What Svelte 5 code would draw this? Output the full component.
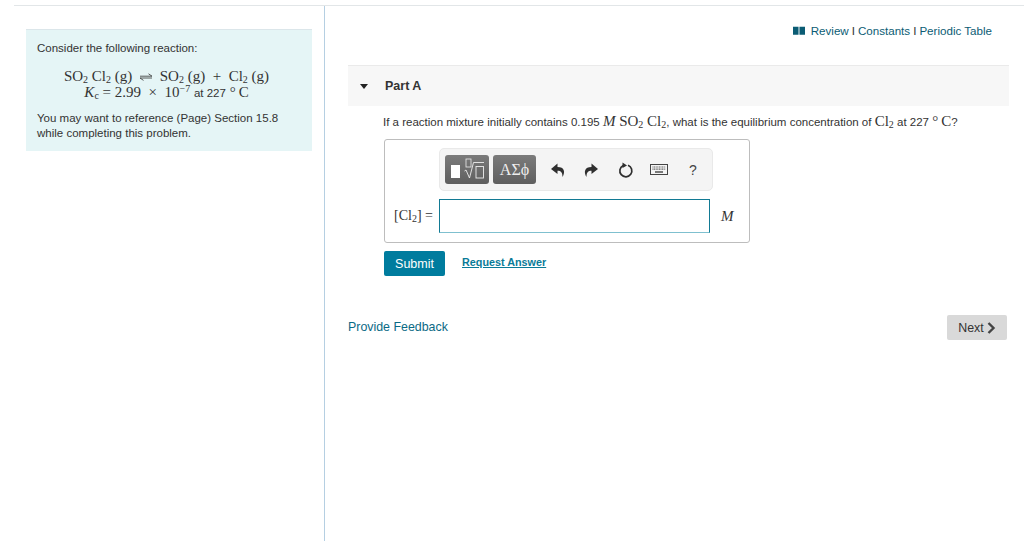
<script>
	const tools = [
		{ name: 'undo', d: 'M7.5 1.5 L1 7 L7.5 12 V8.8 C11 8.8 12.5 10.5 12.5 15 C15.5 10 14.5 5 7.5 5 Z' },
		{ name: 'redo', d: 'M8.5 1.5 L15 7 L8.5 12 V8.8 C5 8.8 3.5 10.5 3.5 15 C0.5 10 1.5 5 8.5 5 Z' }
	];
</script>

<div class="page">
	<aside class="side">
		<div class="intro">
			<p class="lead">Consider the following reaction:</p>
			<div class="reaction">
				<div class="math">SO<sub>2</sub> Cl<sub>2</sub> (g)
					<svg class="eq" viewBox="0 0 14 8" width="14" height="8" aria-hidden="true">
						<path d="M1 3.2 H13 L9.5 0.8 M13 5 H1 L4.5 7.4" fill="none" stroke="#333" stroke-width="0.8" />
					</svg>
					SO<sub>2</sub> (g) &nbsp;+&nbsp; Cl<sub>2</sub> (g)</div>
				<div class="math"><i>K</i><sub>c</sub> = 2.99 &nbsp;×&nbsp; 10<sup>−7</sup>&nbsp;<span class="plain">at 227</span> °&thinsp;C</div>
			</div>
			<p class="note">You may want to reference (Page) Section 15.8<br />while completing this problem.</p>
		</div>
	</aside>

	<main class="content">
		<nav class="links">
			<svg viewBox="0 0 13 9" width="12" height="9" aria-hidden="true">
				<path d="M0 0.5 H6 V9 H0 Z M7 0.5 H13 V9 H7 Z" fill="#0b5c74" />
			</svg>
			<span>Review</span><b>I</b><span>Constants</span><b>I</b><span>Periodic Table</span>
		</nav>

		<section class="part">
			<header class="part-head">
				<span class="caret"></span>
				<h2>Part A</h2>
			</header>
			<p class="question">If a reaction mixture initially contains 0.195 <span class="math big"><i>M</i> SO<sub>2</sub> Cl<sub>2</sub></span>, what is the equilibrium concentration of <span class="math big">Cl<sub>2</sub></span> at 227 <span class="math big">°&thinsp;C</span>?</p>

			<div class="answer-box">
				<div class="toolbar">
					<button class="tmpl" type="button" aria-label="Templates">
						<svg viewBox="0 0 44 29" width="44" height="29" aria-hidden="true">
							<rect x="6" y="10" width="9" height="13" fill="#fff" />
							<rect x="21" y="4" width="5" height="8" fill="none" stroke="#eee" stroke-width="0.8" />
							<path d="M19.5 16 L21 15 L24.5 23 L28.5 7.5 H39" fill="none" stroke="#eee" stroke-width="0.9" />
							<rect x="31" y="11.5" width="7.5" height="11.5" fill="none" stroke="#eee" stroke-width="0.9" />
						</svg>
					</button>
					<button class="tmpl greek" type="button">ΑΣϕ</button>
					{#each tools as tool}
						<svg class="tool {tool.name}" viewBox="0 0 16 16" width="16" height="16" role="img" aria-label={tool.name}>
							<path d={tool.d} fill="#2f2f2f" />
						</svg>
					{/each}
					<svg class="tool reset" viewBox="0 0 16 16" width="16" height="16" role="img" aria-label="reset">
						<path d="M10 3.2 A6 6 0 1 1 5.2 3.4" fill="none" stroke="#2f2f2f" stroke-width="1.7" />
						<path d="M4.5 0.6 L9 3.4 L4.5 6 Z" fill="#2f2f2f" />
					</svg>
					<svg class="tool keys" viewBox="0 0 18 11" width="18" height="11" role="img" aria-label="keyboard">
						<rect x="0.5" y="0.5" width="17" height="10" fill="#f4f4f4" stroke="#444" />
						<path d="M2.5 3 H15.5 M2.5 5.2 H15.5" stroke="#555" stroke-width="1.2" stroke-dasharray="1 0.6" />
						<path d="M5 8 H13" stroke="#444" stroke-width="1.4" />
					</svg>
					<span class="help">?</span>
				</div>
				<div class="entry">
					<span class="math label">[Cl<sub>2</sub>] =</span>
					<input type="text" aria-label="Concentration of Cl2" />
					<span class="math unit"><i>M</i></span>
				</div>
			</div>

			<div class="actions">
				<button class="submit" type="button">Submit</button>
				<span class="request">Request Answer</span>
			</div>

			<footer class="foot">
				<span class="feedback">Provide Feedback</span>
				<button class="next" type="button">Next
					<svg viewBox="0 0 9 12" width="9" height="12" aria-hidden="true">
						<path d="M1.5 1 L6.5 6 L1.5 11" fill="none" stroke="#444" stroke-width="2.4" />
					</svg>
				</button>
			</footer>
		</section>
	</main>
</div>

<style>
	:global(body) {
		margin: 0;
		background: #fff;
		font-family: 'Liberation Sans', Arial, sans-serif;
		color: #333;
	}

	.page {
		display: flex;
		height: 536px;
		margin: 5px 0 0 14px;
		border-top: 1px solid #e2e6e8;
		box-sizing: border-box;
	}

	.side {
		width: 311px;
		flex-shrink: 0;
		box-sizing: border-box;
		padding: 23px 12px 0 12px;
		border-right: 1px solid #b5cfe2;
	}

	.intro {
		height: 122px;
		box-sizing: border-box;
		padding: 11px 11px 0;
		background: #e5f5f6;
		border-top: 1px solid #dbe6ea;
		font-size: 11.5px;
		line-height: 15px;
	}

	.lead,
	.note {
		margin: 0;
	}

	.reaction {
		margin: 12px 0 10px;
		text-align: center;
		width: 259px;
	}

	.math {
		font-family: 'Liberation Serif', 'Times New Roman', serif;
		font-size: 15px;
		line-height: 16px;
		white-space: nowrap;
	}

	.math sub,
	.math sup {
		font-size: 10px;
		line-height: 0;
	}

	.math sub {
		vertical-align: -2px;
	}

	.math sup {
		vertical-align: 5px;
	}

	.plain {
		font-family: 'Liberation Sans', Arial, sans-serif;
		font-size: 11.5px;
	}

	.eq {
		margin: 0 3px;
	}

	.content {
		flex: 1;
		min-width: 0;
		padding: 18px 15px 0 23px;
		box-sizing: border-box;
	}

	.links {
		display: flex;
		justify-content: flex-end;
		align-items: center;
		gap: 3px;
		height: 13px;
		padding-right: 17px;
		font-size: 11.6px;
		color: #0b5c74;
	}

	.links svg {
		margin-right: 3px;
	}

	.links b {
		font-weight: 400;
		color: #333;
	}

	.part {
		margin-top: 28px;
	}

	.part-head {
		display: flex;
		align-items: center;
		height: 40px;
		background: #f7f7f7;
		border-top: 1px solid #eaeaea;
		padding-left: 12px;
	}

	.caret {
		width: 0;
		height: 0;
		border-left: 4.5px solid transparent;
		border-right: 4.5px solid transparent;
		border-top: 5px solid #222;
	}

	h2 {
		margin: 0 0 0 17px;
		font-size: 12.5px;
		font-weight: 700;
		color: #333;
	}

	.question {
		margin: 8px 0 0 35px;
		font-size: 11.5px;
		line-height: 15px;
		white-space: nowrap;
	}

	.big {
		font-size: 15px;
		line-height: 15px;
	}

	.answer-box {
		width: 366px;
		height: 104px;
		box-sizing: border-box;
		margin: 9px 0 0 36px;
		border: 1px solid #bdbdbd;
		border-radius: 3px;
		padding: 8px 0 0 9px;
	}

	.toolbar {
		display: flex;
		align-items: center;
		width: 274px;
		height: 43px;
		box-sizing: border-box;
		margin-left: 45px;
		padding: 0 5px;
		background: #f4f4f4;
		border: 1px solid #e9e9e9;
		border-radius: 5px;
	}

	.tmpl {
		display: flex;
		align-items: center;
		justify-content: center;
		width: 44px;
		height: 29px;
		padding: 0;
		margin-right: 4px;
		border: none;
		border-radius: 3px;
		background: linear-gradient(#7b7b7b, #5f5f5f);
		color: #eee;
		font-family: 'Liberation Serif', serif;
		font-size: 16px;
	}

	.greek {
		width: 43px;
		margin-right: 0;
	}

	.tool {
		flex-shrink: 0;
	}

	.undo {
		margin-left: 14px;
	}

	.redo {
		margin-left: 17px;
	}

	.reset {
		margin-left: 19px;
	}

	.keys {
		margin-left: 16px;
	}

	.help {
		margin-left: 21px;
		font-size: 14px;
		color: #444;
	}

	.entry {
		display: flex;
		align-items: center;
		margin-top: 8px;
	}

	.label {
		width: 45px;
		font-size: 14px;
	}

	input {
		width: 271px;
		height: 34px;
		box-sizing: border-box;
		padding: 0 4px;
		border: 1px solid #127a94;
		border-bottom-color: #7fc0cf;
		background: #fff;
		outline: none;
	}

	.unit {
		margin-left: 11px;
		font-size: 15px;
	}

	.actions {
		display: flex;
		align-items: center;
		margin: 8px 0 0 36px;
	}

	.submit {
		width: 61px;
		height: 25px;
		padding: 0;
		border: none;
		border-radius: 2px;
		background: #007c9e;
		color: #fff;
		font-family: inherit;
		font-size: 12.5px;
	}

	.request {
		margin: -3px 0 0 17px;
		font-size: 10.8px;
		font-weight: 700;
		color: #0a7b98;
		text-decoration: underline;
	}

	.foot {
		display: flex;
		justify-content: space-between;
		align-items: center;
		margin-top: 39px;
		padding-right: 2px;
	}

	.feedback {
		margin-top: -2px;
		font-size: 12.4px;
		color: #0b6a85;
	}

	.next {
		display: flex;
		align-items: center;
		gap: 3px;
		justify-content: center;
		width: 60px;
		height: 25px;
		padding: 0;
		border: none;
		border-radius: 2px;
		background: #d9d9d9;
		color: #333;
		font-family: inherit;
		font-size: 12.4px;
	}
</style>
